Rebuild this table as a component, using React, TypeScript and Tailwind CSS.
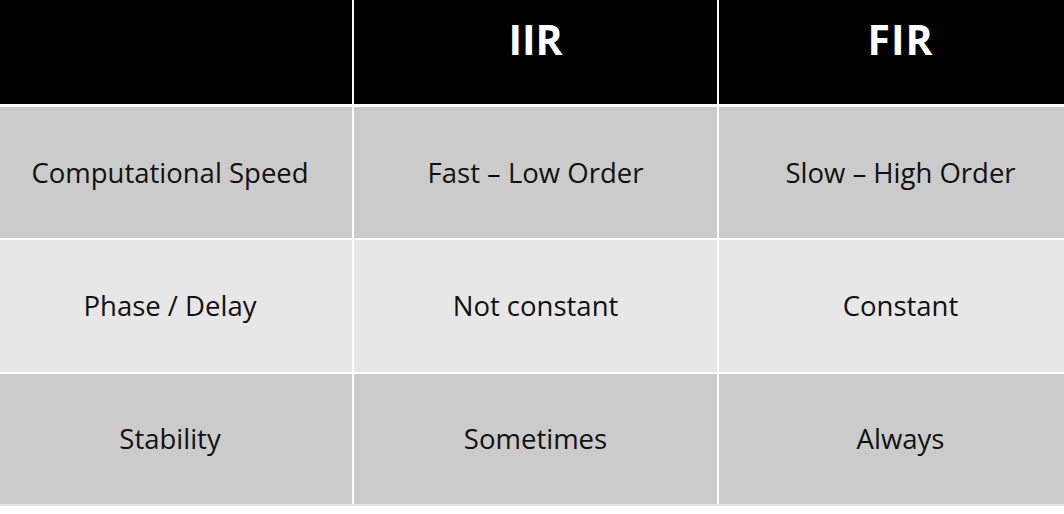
export default function App() {
  const rows = [
    { label: "Computational Speed", iir: "Fast – Low Order", fir: "Slow – High Order", bg: "bg-[#cbcbcb]" },
    { label: "Phase / Delay", iir: "Not constant", fir: "Constant", bg: "bg-[#e7e7e7]" },
    { label: "Stability", iir: "Sometimes", fir: "Always", bg: "bg-[#cbcbcb]" },
  ];

  return (
    <div className="w-[1064px] h-[514px] bg-white font-['Open_Sans',sans-serif]">
      {/* header */}
      <div className="grid grid-cols-[352px_363px_345px] gap-x-[2px] h-[104px]">
        <div className="bg-black" />
        <div className="bg-black flex items-center justify-center text-white font-bold text-[41px] pb-[24px]">IIR</div>
        <div className="bg-black flex items-center justify-center text-white font-bold text-[41px] pb-[24px] pl-[18px] tracking-[1px]">FIR</div>
      </div>
      <div className="h-[3px]" />
      {rows.map((r, i) => (
        <div key={i} className={`grid grid-cols-[352px_363px_345px] gap-x-[2px] ${i === 0 ? "h-[131px]" : i === 1 ? "h-[132px]" : "h-[130px]"} ${i < 2 ? "mb-[2px]" : ""}`}>
          <div className={`${r.bg} flex items-center justify-center text-[#111] text-[27.5px] pr-[12px]`}>{r.label}</div>
          <div className={`${r.bg} flex items-center justify-center text-[#111] text-[27.5px]`}>{r.iir}</div>
          <div className={`${r.bg} flex items-center justify-center text-[#111] text-[27.5px] pl-[18px]`}>{r.fir}</div>
        </div>
      ))}
      <div className="h-[2px] bg-[#e4e4e4]" />
    </div>
  );
}
